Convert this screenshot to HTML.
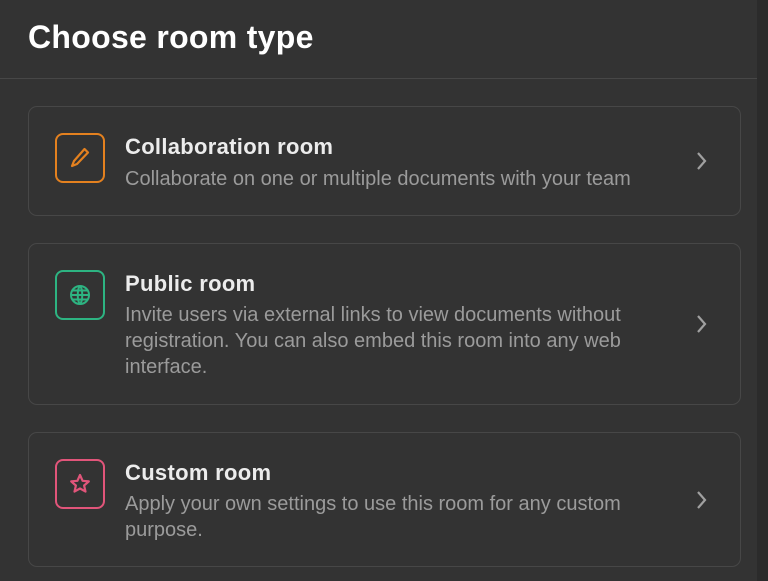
<!DOCTYPE html>
<html><head><style>
html,body{margin:0;padding:0;background:#333333;width:768px;height:581px;overflow:hidden;font-family:"Liberation Sans",sans-serif;}
.hdr{position:absolute;left:0;top:0;width:768px;height:78px;border-bottom:1px solid #474747;}
.hdr h1{position:absolute;left:28px;top:19px;margin:0;font-size:32px;font-weight:bold;color:#fff;letter-spacing:0.3px}
.card{position:absolute;left:28px;width:713px;border:1px solid #474747;border-radius:9px;box-sizing:border-box;background:#333}
.ic{position:absolute;left:26px;width:46px;height:46px;border:2px solid;border-radius:8px}
.ic svg{position:absolute;left:11px;top:11px}
.t{position:absolute;left:96px;font-size:22px;font-weight:bold;color:#ececec;letter-spacing:0.3px}
.d{position:absolute;left:96px;width:540px;font-size:20px;line-height:26px;color:#9b9b9b}
.ch{position:absolute;left:666px}
.edge{position:absolute;left:757px;top:0;width:11px;height:581px;background:#2b2b2b}
</style></head><body>
<div class="hdr"><h1>Choose room type</h1></div>
<div class="card" style="top:106px;height:110px">
 <div class="ic" style="top:26px;border-color:#e4811f"><svg width="24" height="24" viewBox="0 0 24 24" fill="none" stroke="#e4811f" stroke-width="2.2" stroke-linecap="round" stroke-linejoin="round"><path d="M16.5 3l3.5 3.5L9 18l-5 2 2-5z"/></svg></div>
 <div class="t" style="top:27px">Collaboration room</div>
 <div class="d" style="top:59px">Collaborate on one or multiple documents with your team</div>
 <svg class="ch" style="top:43px" width="14" height="22" viewBox="0 0 14 22"><path d="M3 3l7 8-7 8" fill="none" stroke="#a0a0a0" stroke-width="2.2"/></svg>
</div>
<div class="card" style="top:243px;height:162px">
 <div class="ic" style="top:26px;border-color:#2db482"><svg width="24" height="24" viewBox="0 0 24 24" fill="none" stroke="#2db482" stroke-width="2"><circle cx="12" cy="12" r="9"/><path d="M3 12h18M4.5 7.5h15M4.5 16.5h15M12 3c-3 3-3 15 0 18M12 3c3 3 3 15 0 18"/></svg></div>
 <div class="t" style="top:27px">Public room</div>
 <div class="d" style="top:58px">Invite users via external links to view documents without registration. You can also embed this room into any web interface.</div>
 <svg class="ch" style="top:69px" width="14" height="22" viewBox="0 0 14 22"><path d="M3 3l7 8-7 8" fill="none" stroke="#a0a0a0" stroke-width="2.2"/></svg>
</div>
<div class="card" style="top:432px;height:135px">
 <div class="ic" style="top:26px;border-color:#e1557a"><svg width="24" height="24" viewBox="0 0 24 24" fill="none" stroke="#e1557a" stroke-width="2.2" stroke-linejoin="round"><path d="M12 3l2.6 5.8 6.2.6-4.7 4.1 1.4 6.1L12 16.5l-5.5 3.1 1.4-6.1L3.2 9.4l6.2-.6z"/></svg></div>
 <div class="t" style="top:27px">Custom room</div>
 <div class="d" style="top:58px">Apply your own settings to use this room for any custom purpose.</div>
 <svg class="ch" style="top:56px" width="14" height="22" viewBox="0 0 14 22"><path d="M3 3l7 8-7 8" fill="none" stroke="#a0a0a0" stroke-width="2.2"/></svg>
</div>
<div class="edge"></div>
</body></html>
